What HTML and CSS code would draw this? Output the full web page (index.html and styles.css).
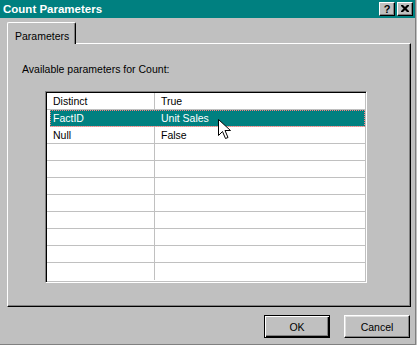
FILE: index.html
```html
<!DOCTYPE html>
<html lang="en">
<head>
  <meta charset="UTF-8" />
  <title>Count Parameters</title>
  <link rel="stylesheet" href="styles.css">
</head>
<body>
  <div class="dialog">
    <div class="titlebar">
      <span class="title">Count Parameters</span>
      <div class="caps">
        <span class="cap help">?</span>
        <span class="cap">
          <svg width="8" height="7" viewBox="0 0 8 7"><path d="M0 0h2l2 2 2-2h2v1l-2.5 2.5L8 6v1H6L4 5 2 7H0V6l2.5-2.5L0 1z" fill="#000"/></svg>
        </span>
      </div>
    </div>

    <div class="tabs">
      <div class="tab">Parameters</div>
    </div>

    <div class="panel">
      <p class="label">Available parameters for Count:</p>
      <div class="grid">
        <div class="row"><span class="cell">Distinct</span><span class="cell">True</span></div>
        <div class="row sel"><span class="cell">FactID</span><span class="cell">Unit Sales</span></div>
        <div class="row"><span class="cell">Null</span><span class="cell">False</span></div>
        <div class="row"><span class="cell"></span><span class="cell"></span></div>
        <div class="row"><span class="cell"></span><span class="cell"></span></div>
        <div class="row"><span class="cell"></span><span class="cell"></span></div>
        <div class="row"><span class="cell"></span><span class="cell"></span></div>
        <div class="row"><span class="cell"></span><span class="cell"></span></div>
        <div class="row"><span class="cell"></span><span class="cell"></span></div>
        <div class="row"><span class="cell"></span><span class="cell"></span></div>
        <div class="row last"><span class="cell"></span><span class="cell"></span></div>
        <svg class="pointer" width="14" height="21" viewBox="0 0 14 21"><path d="M0.5 0.5V16.5L4.5 12.5L7.5 19.5L10 18.5L7 11.5H12.5Z" fill="#fff" stroke="#000" stroke-width="1"/></svg>
      </div>
    </div>

    <div class="footer">
      <button class="btn default">OK</button>
      <button class="btn">Cancel</button>
    </div>
  </div>
</body>
</html>
```

FILE: styles.css
```css
body {
  margin: 0;
  background: #c0c0c0;
  font-family: "Liberation Sans", Arial, sans-serif;
  font-size: 10.5px;
  color: #000;
}
.dialog {
  width: 415px;
  height: 344px;
  border-right: 1px solid #808080;
  border-bottom: 1px solid #808080;
}
.titlebar {
  height: 18px;
  background: #008080;
  display: flex;
  align-items: center;
  justify-content: space-between;
  padding: 0 2px 0 3px;
}
.title {
  color: #fff;
  font-weight: bold;
  font-size: 11.5px;
}
.caps {
  display: flex;
  gap: 2px;
}
.cap {
  box-sizing: border-box;
  width: 16px;
  height: 14px;
  background: #c0c0c0;
  border: 1px solid;
  border-color: #fff #000 #000 #fff;
  box-shadow: inset -1px -1px #808080;
  display: flex;
  align-items: center;
  justify-content: center;
  font-weight: bold;
  font-size: 11px;
  line-height: 1;
}
.cap svg {
  margin: 0 1px 1px 0;
}
.tabs {
  margin: 4px 0 0 7px;
  display: flex;
}
.tab {
  position: relative;
  z-index: 1;
  box-sizing: border-box;
  width: 69px;
  height: 22px;
  margin-bottom: -1px;
  padding: 7px 0 0 7px;
  background: #c0c0c0;
  border: 1px solid;
  border-color: #fff #000 transparent #fff;
  border-bottom: none;
  border-radius: 2px 2px 0 0;
  box-shadow: inset -1px 0 #808080;
  line-height: 13px;
}
.panel {
  box-sizing: border-box;
  margin-left: 7px;
  width: 404px;
  height: 264px;
  padding: 19px 0 0 14px;
  border: 1px solid;
  border-color: #fff #000 #000 #fff;
  box-shadow: inset -1px -1px #808080;
}
.label {
  margin: 0;
  line-height: 13px;
}
.grid {
  position: relative;
  box-sizing: border-box;
  margin: 15px 0 0 23px;
  width: 322px;
  height: 192px;
  background: #fff;
  border: 1px solid;
  border-color: #808080 #fff #fff #808080;
  box-shadow: inset 1px 1px #000, inset -1px -1px #c0c0c0;
  padding: 1px 1px 0 1px;
  overflow: hidden;
}
.row {
  box-sizing: border-box;
  height: 17px;
  display: grid;
  grid-template-columns: 108px 1fr;
  border-bottom: 1px solid #c0c0c0;
  line-height: 16px;
}
.row.last {
  border-bottom: none;
}
.cell {
  padding-left: 6px;
  white-space: nowrap;
}
.cell:first-child {
  border-right: 1px solid #c0c0c0;
}
.row.sel {
  margin-left: 3px;
  grid-template-columns: 105px 1fr;
  background: #008080;
  color: #fff;
  outline: 1px dotted #ff7f7f;
  outline-offset: -1px;
}
.row.sel .cell:first-child {
  padding-left: 3px;
  border-right-color: #008080;
}
.pointer {
  position: absolute;
  left: 172px;
  top: 27px;
}
.footer {
  display: flex;
  justify-content: flex-end;
  gap: 14px;
  padding: 8px 5px 0 0;
}
.btn {
  box-sizing: border-box;
  width: 66px;
  height: 23px;
  padding: 0;
  font-family: inherit;
  font-size: 10.5px;
  color: #000;
  background: #c0c0c0;
  border: 1px solid;
  border-color: #fff #000 #000 #fff;
  box-shadow: inset -1px -1px #808080, inset 1px 1px #dfdfdf;
}
.btn.default {
  border: 1px solid #000;
  box-shadow: inset 1px 1px #fff, inset -1px -1px #000, inset -2px -2px #808080;
}
```
